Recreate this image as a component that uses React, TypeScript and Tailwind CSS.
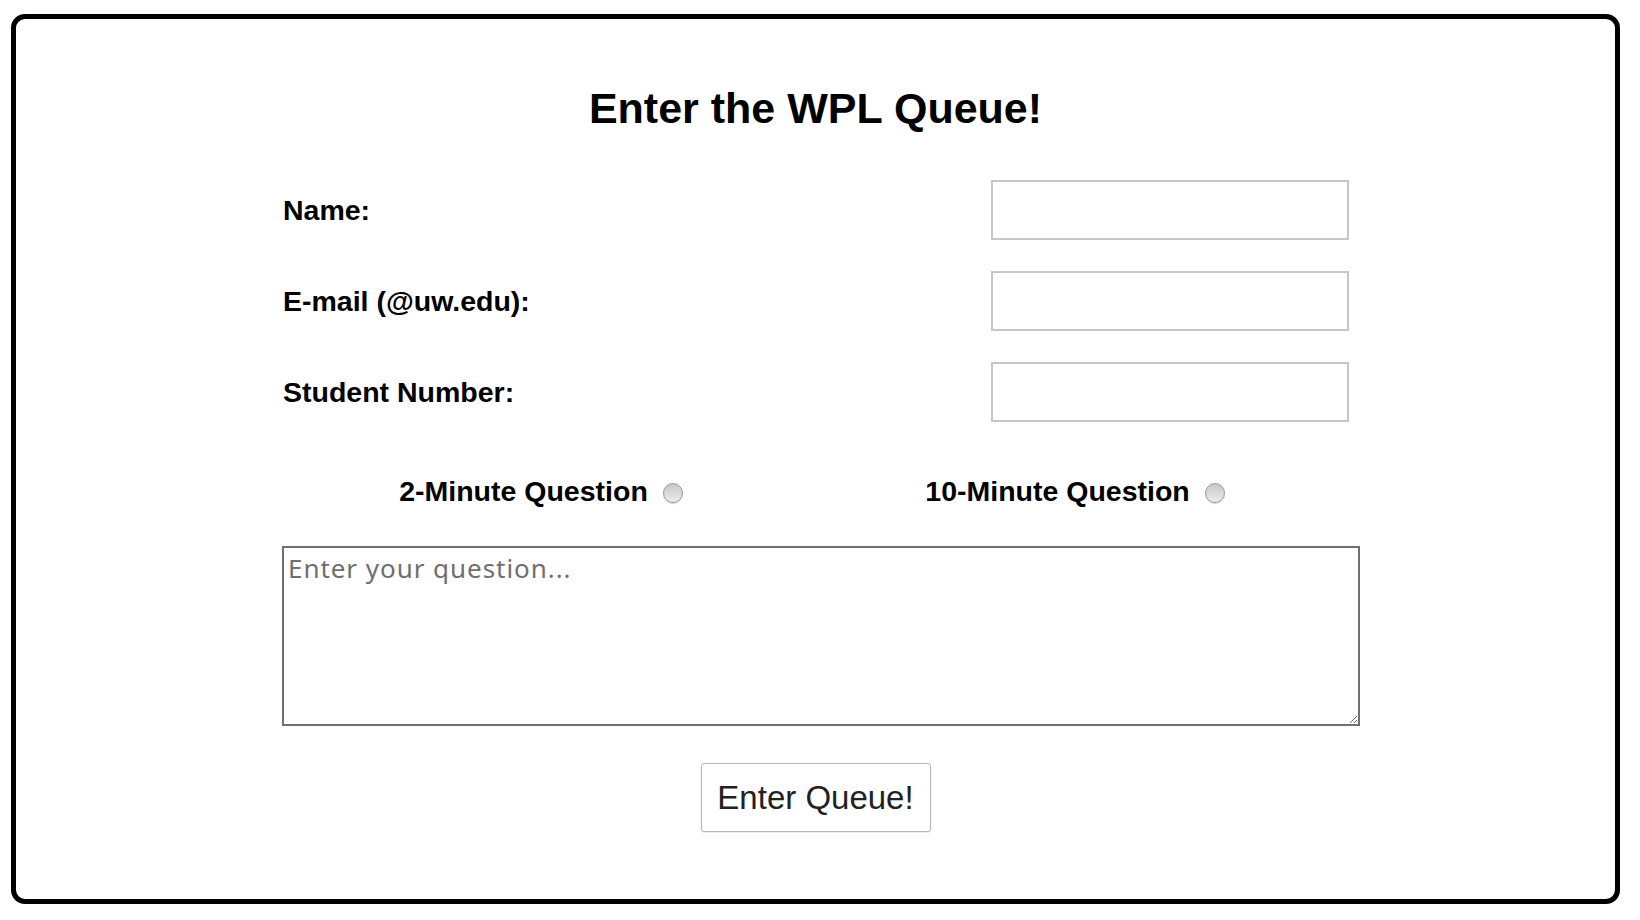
import React, { useState } from 'react';

// ─────────────────────────────────────────────────────────────────────────────
const fields = [
  { id: 'name', label: 'Name:' },
  { id: 'email', label: 'E-mail (@uw.edu):' },
  { id: 'studentNumber', label: 'Student Number:' }
];

const App = () => {
  /* form state */
  const [values, setValues] = useState<Record<string, string>>({});
  const [kind, setKind] = useState<'2' | '10' | null>(null);
  const [question, setQuestion] = useState('');

  const radio = (value: '2' | '10', label: string) => (
    <label className="flex items-center justify-center gap-[15px] cursor-pointer">
      <span className="text-[28.5px] font-bold text-black">{label}</span>
      <input
        type="radio"
        name="kind"
        checked={kind === value}
        onChange={() => setKind(value)}
        className="appearance-none w-[20px] h-[20px] rounded-full border border-[#9c9c9c] bg-gradient-to-b from-[#c8c8c8] to-[#ececec] shadow-[0_1px_1px_rgba(0,0,0,0.2)] checked:from-[#3b82f6] checked:to-[#60a5fa] mt-[3px]"
      />
    </label>
  );

  return (
    <div
      className="min-h-screen bg-white pt-[14px] pl-[11px]"
      style={{ fontFamily: '"Liberation Sans", Arial, sans-serif' }}
    >
      <div className="w-[1609px] h-[890px] border-[5px] border-black rounded-[14px] bg-white">
        {/* title */}
        <h1 className="pt-[63px] text-center text-[43px] leading-[52px] font-bold text-black">
          Enter the WPL Queue!
        </h1>

        {/* form */}
        <div className="ml-[266px] w-[1078px] mt-[46px]">
          <div className="flex flex-col gap-[31px] pr-[11px]">
            {fields.map((f) => (
              <div key={f.id} className="flex items-center justify-between h-[60px]">
                <label htmlFor={f.id} className="pl-[1px] text-[28.5px] font-bold text-black">
                  {f.label}
                </label>
                <input
                  id={f.id}
                  type="text"
                  value={values[f.id] ?? ''}
                  onChange={(e) => setValues({ ...values, [f.id]: e.target.value })}
                  className="w-[358px] h-[60px] border-2 border-[#c6c6c6] bg-white px-2 text-[22px] outline-none"
                />
              </div>
            ))}
          </div>

          {/* question length */}
          <div className="grid grid-cols-[518px_534px] gap-x-[8px] h-[40px] mt-[48px]">
            {radio('2', '2-Minute Question')}
            {radio('10', '10-Minute Question')}
          </div>

          <textarea
            value={question}
            onChange={(e) => setQuestion(e.target.value)}
            placeholder="Enter your question..."
            className="block w-[1078px] h-[180px] mt-[36px] border-2 border-[#707070] bg-white pt-[3px] px-[4px] text-[26px] leading-[35px] tracking-[0.95px] text-black placeholder:text-[#6f6f6f] outline-none"
            style={{ fontFamily: '"Noto Sans", "Open Sans", sans-serif' }}
          />
        </div>

        {/* submit */}
        <div className="flex justify-center mt-[37px]">
          <button
            type="button"
            className="w-[230px] h-[69px] border border-[#b5b5b5] rounded-[3px] bg-white text-[33px] text-[#222222] shadow-[0_1px_1px_rgba(0,0,0,0.08)]"
          >
            Enter Queue!
          </button>
        </div>
      </div>
    </div>
  );
};

export default App;
